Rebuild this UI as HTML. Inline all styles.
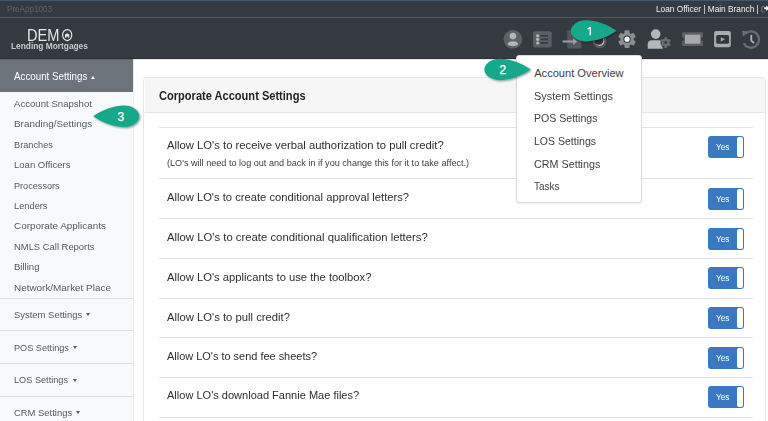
<!DOCTYPE html>
<html><head><meta charset="utf-8">
<style>
*{box-sizing:border-box;margin:0;padding:0}
html,body{width:768px;height:421px;overflow:hidden;background:#fff;font-family:"Liberation Sans",sans-serif;position:relative}
.a{position:absolute}
.t{position:absolute;white-space:nowrap;line-height:1;transform-origin:0 0;font-family:"Liberation Sans",sans-serif}
.sh{position:absolute;left:0;width:133px;height:1px;background:#dcdfe2}
.rl{position:absolute;left:158.7px;width:594px;height:1px;background:#dfe3e7}
.tg{position:absolute;left:708px;width:36px;height:22px;background:#3b78c2;border-radius:3px}
.tg i{position:absolute;left:28.5px;top:1px;width:6.8px;height:20px;background:#fff;border-radius:2px}
.tri{position:absolute;width:0;height:0;border-left:2px solid transparent;border-right:2px solid transparent}
</style></head><body>
<!-- top bar -->
<div class="a" style="left:0;top:0;width:768px;height:59px;background:#343a40"></div>
<div class="a" style="left:0;top:58px;width:768px;height:1px;background:#2c3036"></div>
<div class="a" style="left:0;top:0;width:768px;height:1px;background:#3f5676"></div>
<div class="a" style="left:0;top:17px;width:768px;height:1px;background:#52565b"></div>
<!-- logo DEMO -->

<svg class="a" style="left:0;top:0" width="768" height="60" viewBox="0 0 768 60">
  <ellipse cx="67.2" cy="35.05" rx="4.6" ry="5.5" fill="none" stroke="#eeeeee" stroke-width="1.15"/>
  <path d="M65 37.8 V34.6 L67.2 33.2 L69.3 34.6 V37.8 H68.1 V36.8 Q67.2 36 66.3 36.8 V37.8 Z" fill="#e6e6e6"/>
  <!-- signout icon at far right top -->
  <path d="M765 6.9 H762.4 Q761.7 6.9 761.7 7.6 V11.3 Q761.7 12 762.4 12 H765" fill="none" stroke="#6a6d71" stroke-width="1.2"/>
  <path d="M764.3 7.3 H766.2 V5.6 L769.5 8.3 L766.2 11 V9.3 H764.3 Z" fill="#f4f4f4"/>
  <!-- user circle icon -->
  <circle cx="512.9" cy="39.3" r="9.3" fill="#5d6165"/>
  <circle cx="512.9" cy="36.1" r="3.3" fill="#b3b5b8"/>
  <path d="M507.6 44.8 Q507.6 41.2 512.9 41.2 Q518.2 41.2 518.2 44.8 Q516 46.2 512.9 46.2 Q509.8 46.2 507.6 44.8 Z" fill="#b3b5b8"/>
  <!-- list icon -->
  <rect x="533.1" y="31.2" width="18.6" height="16.4" rx="2" fill="#5c5f63"/>
  <circle cx="537.7" cy="35.8" r="1.6" fill="#b6b9bc"/>
  <circle cx="537.7" cy="39.4" r="1.6" fill="#b6b9bc"/>
  <circle cx="537.7" cy="43" r="1.6" fill="#b6b9bc"/>
  <rect x="540.4" y="35" width="7.6" height="1.6" fill="#36393e"/>
  <rect x="540.4" y="38.6" width="7.6" height="1.6" fill="#36393e"/>
  <rect x="540.4" y="42.2" width="7.6" height="1.6" fill="#36393e"/>
  <!-- sign-in icon -->
  <rect x="567.3" y="30.3" width="14.1" height="18.2" rx="1" fill="#54575b"/>
  <path d="M562.6 40.5 h10.5 v-2.6 l4.2 3.6 -4.2 3.6 v-2.6 h-10.5 Z" fill="#9c9ea1"/>
  <!-- moon/ring icon -->
  <circle cx="599.7" cy="41.3" r="6.9" fill="#55585c"/>
  <circle cx="599.7" cy="41.3" r="4.6" fill="#b9bbbe"/>
  <circle cx="598.8" cy="40.2" r="4.6" fill="#2d3035"/>
  <!-- gear icon -->
  <g transform="translate(627.05 39.2)" fill="#8b8d90">
    <circle r="6.6"/>
    <rect x="-2.5" y="-8.9" width="5" height="17.8" rx="1"/>
    <rect x="-2.5" y="-8.9" width="5" height="17.8" rx="1" transform="rotate(60)"/>
    <rect x="-2.5" y="-8.9" width="5" height="17.8" rx="1" transform="rotate(120)"/>
    <circle r="3.6" fill="#2e3136"/>
    <circle r="2.6" fill="#f6f8fc"/>
  </g>
  <!-- user-cog icon -->
  <circle cx="655.7" cy="34.1" r="4.8" fill="#b4b6b9"/>
  <path d="M647.7 48.7 V44.5 Q647.7 40.2 652 40.2 H659.5 Q662.6 40.6 662.6 44 V48.7 Z" fill="#b4b6b9"/>
  <g transform="translate(665.7 42.6)" fill="#6b6e71">
    <circle r="5.2" fill="#343a40"/>
    <circle r="3.9"/>
    <rect x="-1.2" y="-5.4" width="2.4" height="10.8" rx="0.5"/>
    <rect x="-1.2" y="-5.4" width="2.4" height="10.8" rx="0.5" transform="rotate(60)"/>
    <rect x="-1.2" y="-5.4" width="2.4" height="10.8" rx="0.5" transform="rotate(120)"/>
    <circle r="1.4" fill="#343a40"/>
  </g>
  <!-- ticket icon -->
  <path d="M682.1 32.3 H702.9 V37.2 A2 2 0 0 0 702.9 41.2 V46 H682.1 V41.2 A2 2 0 0 0 682.1 37.2 Z" fill="#5d6064"/>
  <rect x="685" y="34.7" width="15.3" height="9" fill="#a7a9ac"/>
  <!-- video icon -->
  <rect x="714.1" y="31.1" width="16.7" height="16.1" rx="1.8" fill="#a9abae"/>
  <rect x="716.2" y="34.9" width="12.8" height="8.8" rx="1.5" fill="#33373c"/>
  <path d="M720.8 37.2 L725 39.3 L720.8 41.4 Z" fill="#a9abae"/>
  <!-- history icon -->
  <path d="M745.2 33.6 A8.2 8.2 0 1 1 743.6 43.3" fill="none" stroke="#6b6e71" stroke-width="2.3"/>
  <path d="M742 30.8 L748.2 31.6 L743.2 36.8 Z" fill="#6b6e71"/>
  <path d="M751.3 35 V40.6 L754.1 43.2" fill="none" stroke="#b2b4b7" stroke-width="1.8"/>
</svg>

<!-- sidebar -->
<div class="a" style="left:0;top:59px;width:134px;height:362px;background:#f8f9fa;border-right:1px solid #e9ebed"></div>
<div class="a" style="left:0;top:59px;width:133px;height:32.5px;background:#6c737a"></div>
<div class="tri" style="left:91px;top:75.5px;border-bottom:3px solid #fff"></div>
<div class="sh" style="top:298px"></div>
<div class="sh" style="top:330px"></div>
<div class="sh" style="top:363px"></div>
<div class="sh" style="top:395.5px"></div>
<div class="tri" style="left:86.4px;top:313px;border-top:3px solid #555a5f"></div>
<div class="tri" style="left:73.4px;top:346.4px;border-top:3px solid #555a5f"></div>
<div class="tri" style="left:72.6px;top:378.5px;border-top:3px solid #555a5f"></div>
<div class="tri" style="left:76.2px;top:411.2px;border-top:3px solid #555a5f"></div>

<div class="a" style="left:0;top:59px;width:768px;height:1px;background:rgba(0,0,0,.10)"></div>
<!-- card -->
<div class="a" style="left:143px;top:77px;width:623px;height:400px;border:1px solid #e4e6e8;border-radius:4px;background:#fff"></div>
<div class="a" style="left:144.5px;top:78px;width:620.5px;height:35px;background:#f6f6f6;border-bottom:1px solid #e5e6e8;border-radius:3px 3px 0 0"></div>
<div class="rl" style="top:126.5px"></div>
<div class="rl" style="top:178px"></div>
<div class="rl" style="top:217.7px"></div>
<div class="rl" style="top:257.8px"></div>
<div class="rl" style="top:297.5px"></div>
<div class="rl" style="top:337.1px"></div>
<div class="rl" style="top:376.9px"></div>
<div class="rl" style="top:416.7px"></div>
<div class="tg" style="top:136px"><i></i></div>
<div class="tg" style="top:187.7px"><i></i></div>
<div class="tg" style="top:227.6px"><i></i></div>
<div class="tg" style="top:266.9px"><i></i></div>
<div class="tg" style="top:307.2px"><i></i></div>
<div class="tg" style="top:346.9px"><i></i></div>
<div class="tg" style="top:386.2px"><i></i></div>

<!-- dropdown -->
<div class="a" style="left:516px;top:55px;width:125.5px;height:148px;background:#fff;border:1px solid #dcdcdc;border-radius:3px;box-shadow:0 1px 2px rgba(0,0,0,.08)"></div>

<div class='t' style='left:7.30px;top:4.80px;font-size:8.4px;color:#606468;font-weight:normal;transform:scaleX(0.9638);'>PreApp1003</div>
<div class='t' style='left:655.80px;top:5.20px;font-size:8.6px;color:#f2f2f2;font-weight:normal;transform:scaleX(0.9645);'>Loan Officer | Main Branch |</div>
<div class='t' style='left:27.30px;top:27.90px;font-size:15.6px;color:#e6e6e6;font-weight:normal;transform:scaleX(0.9371);'>DEM</div>
<div class='t' style='left:10.90px;top:42.10px;font-size:8.6px;color:#c9cacb;font-weight:bold;transform:scaleX(0.9700);'>Lending Mortgages</div>
<div class='t' style='left:14.40px;top:71.80px;font-size:10.2px;color:#ffffff;font-weight:normal;transform:scaleX(0.9597);'>Account Settings</div>
<div class='t' style='left:14.40px;top:98.60px;font-size:9.9px;color:#555a5f;font-weight:normal;transform:scaleX(0.9728);'>Account Snapshot</div>
<div class='t' style='left:14.40px;top:119.08px;font-size:9.9px;color:#555a5f;font-weight:normal;transform:scaleX(1.0038);'>Branding/Settings</div>
<div class='t' style='left:14.40px;top:139.56px;font-size:9.9px;color:#555a5f;font-weight:normal;transform:scaleX(0.9310);'>Branches</div>
<div class='t' style='left:14.40px;top:160.04px;font-size:9.9px;color:#555a5f;font-weight:normal;transform:scaleX(0.9644);'>Loan Officers</div>
<div class='t' style='left:14.40px;top:180.52px;font-size:9.9px;color:#555a5f;font-weight:normal;transform:scaleX(0.9240);'>Processors</div>
<div class='t' style='left:14.40px;top:201.00px;font-size:9.9px;color:#555a5f;font-weight:normal;transform:scaleX(0.9389);'>Lenders</div>
<div class='t' style='left:14.40px;top:221.48px;font-size:9.9px;color:#555a5f;font-weight:normal;transform:scaleX(1.0022);'>Corporate Applicants</div>
<div class='t' style='left:14.40px;top:241.96px;font-size:9.9px;color:#555a5f;font-weight:normal;transform:scaleX(0.9529);'>NMLS Call Reports</div>
<div class='t' style='left:14.40px;top:262.44px;font-size:9.9px;color:#555a5f;font-weight:normal;transform:scaleX(0.9667);'>Billing</div>
<div class='t' style='left:14.40px;top:282.92px;font-size:9.9px;color:#555a5f;font-weight:normal;transform:scaleX(1.0031);'>Network/Market Place</div>
<div class='t' style='left:14.40px;top:309.80px;font-size:9.9px;color:#555a5f;font-weight:normal;transform:scaleX(0.9556);'>System Settings</div>
<div class='t' style='left:14.40px;top:343.20px;font-size:9.9px;color:#555a5f;font-weight:normal;transform:scaleX(0.9267);'>POS Settings</div>
<div class='t' style='left:14.40px;top:375.30px;font-size:9.9px;color:#555a5f;font-weight:normal;transform:scaleX(0.9288);'>LOS Settings</div>
<div class='t' style='left:14.40px;top:408.00px;font-size:9.9px;color:#555a5f;font-weight:normal;transform:scaleX(0.9541);'>CRM Settings</div>
<div class='t' style='left:158.90px;top:89.70px;font-size:12.3px;color:#212529;font-weight:bold;transform:scaleX(0.9000);'>Corporate Account Settings</div>
<div class='t' style='left:167.30px;top:139.20px;font-size:11.7px;color:#2b2f33;font-weight:normal;transform:scaleX(0.9648);'>Allow LO's to receive verbal authorization to pull credit?</div>
<div class='t' style='left:167.30px;top:190.90px;font-size:11.7px;color:#2b2f33;font-weight:normal;transform:scaleX(0.9593);'>Allow LO's to create conditional approval letters?</div>
<div class='t' style='left:167.30px;top:231.00px;font-size:11.7px;color:#2b2f33;font-weight:normal;transform:scaleX(0.9685);'>Allow LO's to create conditional qualification letters?</div>
<div class='t' style='left:167.30px;top:270.70px;font-size:11.7px;color:#2b2f33;font-weight:normal;transform:scaleX(0.9610);'>Allow LO's applicants to use the toolbox?</div>
<div class='t' style='left:167.30px;top:310.70px;font-size:11.7px;color:#2b2f33;font-weight:normal;transform:scaleX(0.9633);'>Allow LO's to pull credit?</div>
<div class='t' style='left:167.30px;top:349.90px;font-size:11.7px;color:#2b2f33;font-weight:normal;transform:scaleX(0.9369);'>Allow LO's to send fee sheets?</div>
<div class='t' style='left:167.30px;top:389.30px;font-size:11.7px;color:#2b2f33;font-weight:normal;transform:scaleX(0.9436);'>Allow LO's download Fannie Mae files?</div>
<div class='t' style='left:167.20px;top:158.50px;font-size:9px;color:#3a3e42;font-weight:normal;transform:scaleX(1.0114);'>(LO's will need to log out and back in if you change this for it to take affect.)</div>
<div class='t' style='left:716.20px;top:142.00px;font-size:9.6px;color:#ffffff;font-weight:normal;transform:scaleX(0.8625);'>Yes</div>
<div class='t' style='left:716.20px;top:193.70px;font-size:9.6px;color:#ffffff;font-weight:normal;transform:scaleX(0.8625);'>Yes</div>
<div class='t' style='left:716.20px;top:233.60px;font-size:9.6px;color:#ffffff;font-weight:normal;transform:scaleX(0.8625);'>Yes</div>
<div class='t' style='left:716.20px;top:272.90px;font-size:9.6px;color:#ffffff;font-weight:normal;transform:scaleX(0.8625);'>Yes</div>
<div class='t' style='left:716.20px;top:313.20px;font-size:9.6px;color:#ffffff;font-weight:normal;transform:scaleX(0.8625);'>Yes</div>
<div class='t' style='left:716.20px;top:352.90px;font-size:9.6px;color:#ffffff;font-weight:normal;transform:scaleX(0.8625);'>Yes</div>
<div class='t' style='left:716.20px;top:392.20px;font-size:9.6px;color:#ffffff;font-weight:normal;transform:scaleX(0.8625);'>Yes</div>
<div class='t' style='left:534.20px;top:67.80px;font-size:11.1px;color:#3d4146;font-weight:normal;'>Account Overview</div>
<div class='t' style='left:534.20px;top:90.50px;font-size:11.1px;color:#3d4146;font-weight:normal;transform:scaleX(0.9850);'>System Settings</div>
<div class='t' style='left:534.20px;top:113.20px;font-size:11.1px;color:#3d4146;font-weight:normal;transform:scaleX(0.9522);'>POS Settings</div>
<div class='t' style='left:534.20px;top:135.90px;font-size:11.1px;color:#3d4146;font-weight:normal;transform:scaleX(0.9485);'>LOS Settings</div>
<div class='t' style='left:534.20px;top:158.60px;font-size:11.1px;color:#3d4146;font-weight:normal;transform:scaleX(0.9696);'>CRM Settings</div>
<div class='t' style='left:534.20px;top:181.30px;font-size:11.1px;color:#3d4146;font-weight:normal;transform:scaleX(0.8966);'>Tasks</div>

<!-- callouts -->
<svg class="a" style="left:0;top:0" width="768" height="421" viewBox="0 0 768 421">
  <defs>
    <filter id="sh" x="-20%" y="-30%" width="140%" height="170%">
      <feGaussianBlur in="SourceAlpha" stdDeviation="0.8"/>
      <feOffset dx="0.5" dy="1" result="b"/>
      <feComponentTransfer><feFuncA type="linear" slope="0.45"/></feComponentTransfer>
      <feMerge><feMergeNode/><feMergeNode in="SourceGraphic"/></feMerge>
    </filter>
  </defs>
  <g filter="url(#sh)" fill="#13a88a">
    <path d="M616.5 30.85 C607.2 24.25 595.4 20.3 585.9 20.3 A15.10 10.55 0 0 0 585.9 41.400000000000006 C595.4 41.400000000000006 607.2 37.45 616.5 30.85 Z"/>
    <path d="M530.6 69.5 C521.3000000000001 62.9 509.5 58.8 500.0 58.8 A15.60 10.70 0 0 0 500.0 80.2 C509.5 80.2 521.3000000000001 76.1 530.6 69.5 Z"/>
    <path d="M93.25 116.3 C102.55 109.7 114.35 105.575 123.85 105.575 A15.45 10.72 0 0 1 123.85 127.02499999999999 C114.35 127.02499999999999 102.55 122.89999999999999 93.25 116.3 Z"/>
  </g>
  <path d="M590.2 35.2 V27.3 L587.6 29.3" fill="none" stroke="#fff" stroke-width="1.35" stroke-linejoin="round"/>
  <g fill="#fff" font-family="Liberation Sans, sans-serif" font-size="12" text-anchor="middle" stroke="#fff" stroke-width="0.25">
    
    <text x="502.8" y="73.9">2</text>
    <text x="120.9" y="120.7">3</text>
  </g>
</svg>
</body></html>
